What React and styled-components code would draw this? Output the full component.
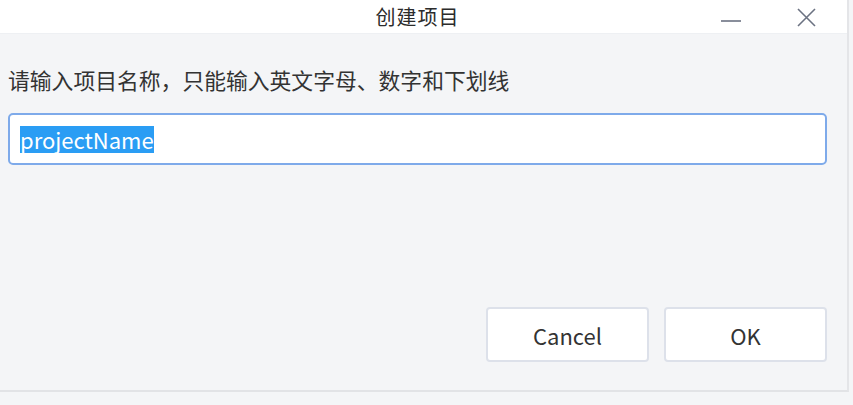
import React from "react";
import styled, { createGlobalStyle } from "styled-components";

const Global = createGlobalStyle`
  html, body { margin: 0; padding: 0; background: #f4f5f7; }
  body { font-family: "Noto Sans CJK SC", "Noto Sans", sans-serif; color: #333; }
`;

const Window = styled.div`
  width: 847px;
  height: 390px;
  display: flex;
  flex-direction: column;
  background: #f4f5f7;
  border-right: 2px solid #e4e5e8;
  border-bottom: 2px solid #e2e3e6;
`;

const TitleBar = styled.div`
  height: 33px;
  background: #ffffff;
  display: grid;
  grid-template-columns: 1fr auto 1fr;
  align-items: center;
  border-bottom: 1px solid #eef0f3;
`;

const Title = styled.div`
  grid-column: 2;
  font-size: 20px;
  color: #2b2b2b;
  letter-spacing: 1px;
  margin-left: -12px;
  line-height: 33px;
`;

const Controls = styled.div`
  justify-self: end;
  display: flex;
  align-items: center;
  gap: 54px;
  padding-right: 29px;
`;

const CtrlIcon = styled.svg`
  display: block;
  width: 22px;
  height: 22px;
`;

const Body = styled.div`
  flex: 1;
  display: flex;
  flex-direction: column;
  padding: 31px 20px 28px 8px;
`;

const Label = styled.div`
  font-size: 21.8px;
  line-height: 30px;
  color: #333;
`;

const Field = styled.div`
  margin-top: 18px;
  height: 48px;
  border: 2px solid #7eaaea;
  border-radius: 5px;
  background: #fff;
  display: flex;
  align-items: center;
  padding-left: 10px;
`;

const Selected = styled.span`
  font-size: 22px;
  line-height: 26px;
  padding-bottom: 1px;
  background: #2a9df4;
  color: #fff;
`;

const Buttons = styled.div`
  margin-top: auto;
  display: flex;
  justify-content: flex-end;
  gap: 15px;
`;

const Button = styled.button`
  width: 163px;
  height: 55px;
  background: #fff;
  border: 2px solid #dde1ea;
  border-radius: 4px;
  font-family: "Noto Sans CJK SC", "Noto Sans", sans-serif;
  font-size: 22px;
  color: #333;
  padding: 0;
`;

export default function App() {
  return (
    <>
      <Global />
      <Window>
        <TitleBar>
          <Title>创建项目</Title>
          <Controls>
            <CtrlIcon viewBox="0 0 22 22">
              <line x1="1" y1="15" x2="21" y2="15" stroke="#6b7282" strokeWidth="1.6" />
            </CtrlIcon>
            <CtrlIcon viewBox="0 0 22 22">
              <path d="M2 3 L19 20 M19 3 L2 20" stroke="#6b7282" strokeWidth="1.6" fill="none" />
            </CtrlIcon>
          </Controls>
        </TitleBar>
        <Body>
          <Label>请输入项目名称，只能输入英文字母、数字和下划线</Label>
          <Field>
            <Selected>projectName</Selected>
          </Field>
          <Buttons>
            <Button>Cancel</Button>
            <Button>OK</Button>
          </Buttons>
        </Body>
      </Window>
    </>
  );
}
